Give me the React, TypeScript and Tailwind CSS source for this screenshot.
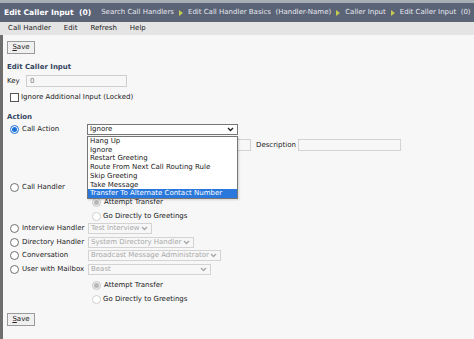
import React from "react";

const font = { fontFamily: '"DejaVu Sans", Verdana, sans-serif' };

function Radio({ checked, disabled }: { checked?: boolean; disabled?: boolean }) {
  if (checked && !disabled) {
    return (
      <span className="flex h-[9px] w-[9px] shrink-0 items-center justify-center rounded-full border border-[#1a6fd6] bg-white">
        <span className="h-[5px] w-[5px] rounded-full bg-[#1a6fd6]" />
      </span>
    );
  }
  if (checked && disabled) {
    return (
      <span className="flex h-[9px] w-[9px] shrink-0 items-center justify-center rounded-full border border-[#c9c9c9] bg-[#eeeeee]">
        <span className="h-[5px] w-[5px] rounded-full bg-[#b8b8b8]" />
      </span>
    );
  }
  return (
    <span
      className={
        "h-[9px] w-[9px] shrink-0 rounded-full border bg-white " +
        (disabled ? "border-[#cfcfcf]" : "border-[#6f6f6f]")
      }
    />
  );
}

function Chevron({ color }: { color: string }) {
  return (
    <svg width="7" height="5" viewBox="0 0 7 5" className="shrink-0">
      <path d="M1 1 L3.5 3.5 L6 1" fill="none" stroke={color} strokeWidth="1.4" />
    </svg>
  );
}

function DisabledSelect({ label, width }: { label: string; width: string }) {
  return (
    <div
      className={
        "flex h-[11px] items-center justify-between border border-[#d3d3d3] bg-[#f7f7f7] pl-[2px] pr-[3px] text-[#a8a8a8] " +
        width
      }
    >
      <span className="whitespace-nowrap">{label}</span>
      <Chevron color="#a8a8a8" />
    </div>
  );
}

function Crumb() {
  return (
    <span className="mx-[5px] inline-block h-0 w-0 border-y-[3px] border-l-[4px] border-y-transparent border-l-[#c3cc4f]" />
  );
}

const options = [
  "Hang Up",
  "Ignore",
  "Restart Greeting",
  "Route From Next Call Routing Rule",
  "Skip Greeting",
  "Take Message",
  "Transfer To Alternate Contact Number",
];

export default function App() {
  return (
    <div
      className="relative flex h-[339px] w-[474px] flex-col overflow-hidden bg-[#f7f7f7] text-[7px] text-[#222]"
      style={font}
    >
      <div className="h-[3px] bg-[#a9adb4]" />

      <div className="flex h-[19px] items-center whitespace-nowrap bg-[#5b6377] pl-[4px] text-white">
        <span className="text-[7.6px] font-bold">Edit Caller Input&nbsp;&nbsp;(0)</span>
        <span className="ml-[10px] flex items-center text-[#e6e8ee]">
          Search Call Handlers
          <Crumb />
          Edit Call Handler Basics&nbsp;&nbsp;(Handler-Name)
          <Crumb />
          Caller Input
          <Crumb />
          Edit Caller Input&nbsp;&nbsp;(0)
        </span>
      </div>

      <div className="flex h-[13px] items-center gap-[13px] bg-[#e4e4e4] pl-[8px] text-[#222]">
        <span>Call Handler</span>
        <span>Edit</span>
        <span>Refresh</span>
        <span>Help</span>
      </div>

      <div className="flex flex-1 flex-col border-l-[3px] border-[#6e6e6e] pl-[4px]">
        <button className="mt-[6px] flex h-[13px] w-[28px] items-center justify-center border border-[#9a9a9a] bg-[#f0f0f0] text-[7px]">
          <span className="underline">S</span>ave
        </button>

        <div className="mt-[8px] flex h-[10px] items-center font-bold text-[#34455f]">
          Edit Caller Input
        </div>

        <div className="mt-[3px] flex h-[12px] items-center">
          <span className="w-[19px]">Key</span>
          <div className="flex h-[12px] w-[101px] items-center border border-[#cfcfcf] bg-[#f7f7f7] pl-[3px] text-[#777]">
            0
          </div>
        </div>

        <div className="mt-[5px] flex h-[10px] items-center pl-[3px]">
          <span className="h-[9px] w-[9px] border border-[#555] bg-white" />
          <span className="ml-[2px]">Ignore Additional Input (Locked)</span>
        </div>

        <div className="mt-[10px] flex h-[10px] items-center font-bold text-[#34455f]">
          Action
        </div>

        <div className="mt-[2px] flex h-[11px] items-center pl-[3px]">
          <div className="flex w-[77px] items-center gap-[3px]">
            <Radio checked />
            <span>Call Action</span>
          </div>
          <div className="flex h-[11px] w-[151px] items-center justify-between border border-[#767676] bg-white pl-[2px] pr-[3px]">
            <span>Ignore</span>
            <Chevron color="#222" />
          </div>
        </div>

        <div className="mt-[4px] flex h-[12px] items-center pl-[80px]">
          <div className="h-[12px] w-[164px] border border-[#d3d3d3] bg-[#f7f7f7]" />
          <span className="ml-[5px] w-[42px]">Description</span>
          <div className="h-[12px] w-[103px] border border-[#d3d3d3] bg-[#f7f7f7]" />
        </div>

        <div className="mt-[31px] flex h-[10px] items-center pl-[3px]">
          <div className="flex w-[77px] items-center gap-[3px]">
            <Radio />
            <span>Call Handler</span>
          </div>
        </div>

        <div className="mt-[5px] flex h-[10px] items-center gap-[2px] pl-[85px]">
          <Radio checked disabled />
          <span className="ml-[1px]">Attempt Transfer</span>
        </div>
        <div className="mt-[4px] flex h-[10px] items-center gap-[2px] pl-[85px]">
          <Radio disabled />
          <span>Go Directly to Greetings</span>
        </div>

        {[
          { label: "Interview Handler", value: "Test Interview", w: "w-[64px]", mt: "mt-[2px]" },
          { label: "Directory Handler", value: "System Directory Handler", w: "w-[106px]", mt: "mt-[3px]" },
          { label: "Conversation", value: "Broadcast Message Administrator", w: "w-[133px]", mt: "mt-[2px]" },
          { label: "User with Mailbox", value: "Beast", w: "w-[123px]", mt: "mt-[3px]" },
        ].map((row) => (
          <div key={row.label} className={"flex h-[11px] items-center pl-[3px] " + row.mt}>
            <div className="flex w-[78px] items-center gap-[3px] whitespace-nowrap">
              <Radio />
              <span>{row.label}</span>
            </div>
            <DisabledSelect label={row.value} width={row.w} />
          </div>
        ))}

        <div className="mt-[5px] flex h-[10px] items-center gap-[2px] pl-[85px]">
          <Radio checked disabled />
          <span className="ml-[1px]">Attempt Transfer</span>
        </div>
        <div className="mt-[4px] flex h-[10px] items-center gap-[2px] pl-[85px]">
          <Radio disabled />
          <span>Go Directly to Greetings</span>
        </div>

        <button className="mt-[9px] flex h-[13px] w-[28px] items-center justify-center border border-[#9a9a9a] bg-[#f0f0f0] text-[7px]">
          <span className="underline">S</span>ave
        </button>
      </div>

      {/* open dropdown list of Call Action */}
      <div className="absolute left-[87px] top-[136px] w-[151px] border border-[#767676] bg-white shadow-[1px_1px_2px_rgba(0,0,0,0.15)]">
        {options.map((opt, i) => (
          <div
            key={opt}
            className={
              "flex h-[8.7px] items-center whitespace-nowrap pl-[2px] " +
              (i === options.length - 1 ? "bg-[#2a78dc] text-white" : "text-[#222]")
            }
          >
            {opt}
          </div>
        ))}
      </div>
    </div>
  );
}
